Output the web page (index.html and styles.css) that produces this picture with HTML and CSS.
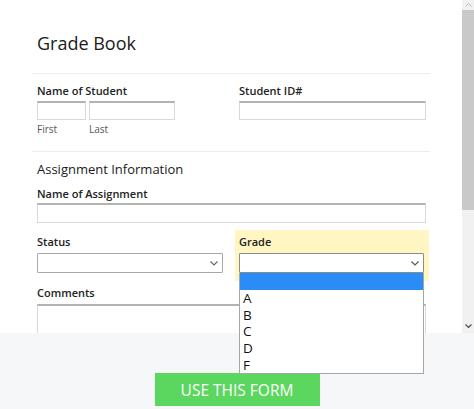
FILE: index.html
```html
<!DOCTYPE html>
<html>
<head>
<meta charset="utf-8">
<link rel="stylesheet" href="styles.css">
</head>
<body>
<div class="frame">
  <div class="viewport">
    <main class="page">
      <h1 class="title">Grade Book</h1>
      <div class="form">
        <div class="divider"></div>
        <div class="row row-student">
          <div class="cell cell-left">
            <div class="label">Name of Student</div>
            <div class="name-inputs">
              <div class="name-part">
                <div class="input input-first"></div>
                <div class="sublabel">First</div>
              </div>
              <div class="name-part">
                <div class="input input-last"></div>
                <div class="sublabel">Last</div>
              </div>
            </div>
          </div>
          <div class="cell cell-right">
            <div class="label">Student ID#</div>
            <div class="input input-id"></div>
          </div>
        </div>
        <div class="divider"></div>
        <div class="section-title">Assignment Information</div>
        <div class="field field-full">
          <div class="label">Name of Assignment</div>
          <div class="input input-full"></div>
        </div>
        <div class="row row-status">
          <div class="cell cell-left cell-status">
            <div class="label">Status</div>
            <div class="select select-status">
              <svg class="chev" width="8" height="5" viewBox="0 0 8 5"><polyline points="0.5,0.5 4,4 7.5,0.5" fill="none" stroke="#666" stroke-width="1.1"/></svg>
            </div>
          </div>
          <div class="cell cell-right cell-grade">
            <div class="label">Grade</div>
            <div class="select-wrap">
              <div class="select select-grade">
                <svg class="chev" width="8" height="5" viewBox="0 0 8 5"><polyline points="0.5,0.5 4,4 7.5,0.5" fill="none" stroke="#555" stroke-width="1.1"/></svg>
              </div>
              <ul class="options">
                <li class="option option-active">&nbsp;</li>
                <li class="option">A</li>
                <li class="option">B</li>
                <li class="option">C</li>
                <li class="option">D</li>
                <li class="option">F</li>
              </ul>
            </div>
          </div>
        </div>
        <div class="field field-full field-comments">
          <div class="label">Comments</div>
          <div class="input textarea"></div>
        </div>
      </div>
    </main>
    <div class="scrollbar">
      <div class="sb-btn">
        <svg width="7" height="4" viewBox="0 0 7 4"><polyline points="0.5,3.5 3.5,0.5 6.5,3.5" fill="none" stroke="#b5b5b5" stroke-width="1"/></svg>
      </div>
      <div class="sb-thumb"></div>
      <div class="sb-track"></div>
      <div class="sb-btn sb-btn-down">
        <svg width="7" height="4" viewBox="0 0 7 4"><polyline points="0.5,0.5 3.5,3.5 6.5,0.5" fill="none" stroke="#505050" stroke-width="1.2"/></svg>
      </div>
    </div>
  </div>
  <footer class="footer">
    <button class="use-btn">USE THIS FORM</button>
  </footer>
</div>
</body>
</html>
```

FILE: styles.css
```css
* { box-sizing: border-box; }

body {
  margin: 0;
  font-family: "Open Sans", "Liberation Sans", sans-serif;
  color: #222;
  background: #fff;
}

.frame {
  width: 474px;
  height: 409px;
  display: flex;
  flex-direction: column;
  overflow: hidden;
}

.viewport {
  height: 333px;
  flex-shrink: 0;
  display: flex;
}

.page {
  flex: 1;
  padding: 31px 0 0 32px;
}

.title {
  font-size: 18px;
  font-weight: 400;
  line-height: 24px;
  margin: 0 0 18px 5px;
  color: #1a1a1a;
}

.form {
  width: 398px;
}

.divider {
  height: 1px;
  background: #ececec;
}

.label {
  font-size: 11px;
  font-weight: 600;
  line-height: 14px;
  color: #222;
}

.input {
  height: 19px;
  background: #fff;
  border: 1px solid #d9d9d9;
  border-top: 2px solid #b3b3b3;
}

.row {
  display: grid;
  grid-template-columns: 203px 194px;
}

.cell-left {
  padding-left: 5px;
}

.cell-right {
  padding-left: 4px;
}

.row-student {
  padding: 10px 0 15px;
}

.row-student .label {
  margin-bottom: 3px;
}

.name-inputs {
  display: flex;
  gap: 3px;
}

.input-first { width: 49px; }
.input-last { width: 86px; }
.input-id { width: 187px; }

.sublabel {
  font-size: 10px;
  line-height: 13px;
  color: #555;
  margin-top: 3px;
}

.section-title {
  font-size: 13px;
  line-height: 17px;
  margin: 9px 0 0 5px;
  color: #1a1a1a;
}

.field-full {
  padding-left: 5px;
}

.field-full .label {
  margin-top: 9px;
  margin-bottom: 2px;
}

.input-full {
  width: 389px;
  height: 20px;
}

.row-status {
  margin-top: 7px;
}

.cell-status,
.cell-grade {
  padding-top: 5px;
  padding-bottom: 8px;
}

.cell-grade {
  background: #fff6c4;
}

.cell-status .label,
.cell-grade .label {
  margin-bottom: 4px;
}

.select {
  height: 20px;
  background: #fff;
  border: 1px solid #a8a8a8;
  border-radius: 1px;
  display: flex;
  align-items: center;
  justify-content: flex-end;
  padding-right: 4px;
}

.select-status {
  width: 186px;
}

.select-wrap {
  position: relative;
  width: 185px;
}

.select-grade {
  border-color: #8c8c8c;
}

.options {
  position: absolute;
  top: 100%;
  left: 0;
  width: 185px;
  margin: 0;
  padding: 0;
  list-style: none;
  background: #fff;
  border: 1px solid #a6a6a6;
  border-top: none;
  z-index: 2;
}

.option {
  font-size: 13.5px;
  line-height: 16.7px;
  height: 16.7px;
  padding-left: 3px;
  color: #111;
}

.option-active {
  background: #2a8cf7;
  height: 17px;
}

.field-comments .label {
  margin-top: 5px;
  margin-bottom: 4px;
}

.textarea {
  width: 389px;
  height: 60px;
}

.scrollbar {
  width: 12px;
  background: #f1f1f1;
  display: flex;
  flex-direction: column;
}

.sb-btn {
  height: 10px;
  display: flex;
  align-items: center;
  justify-content: center;
}

.sb-btn-down {
  height: 14px;
}

.sb-thumb {
  height: 200px;
  background: #c9c9c9;
}

.sb-track {
  flex: 1;
}

.footer {
  position: relative;
  z-index: 1;
  flex: 1;
  background: #f5f7f9;
  display: flex;
  justify-content: center;
  align-items: flex-start;
  padding-top: 40px;
}

.use-btn {
  width: 165px;
  height: 33px;
  border: none;
  background: #5bd65e;
  color: #fff;
  font-family: "Open Sans", "Liberation Sans", sans-serif;
  font-size: 15.5px;
  padding: 0;
  cursor: pointer;
}
```
